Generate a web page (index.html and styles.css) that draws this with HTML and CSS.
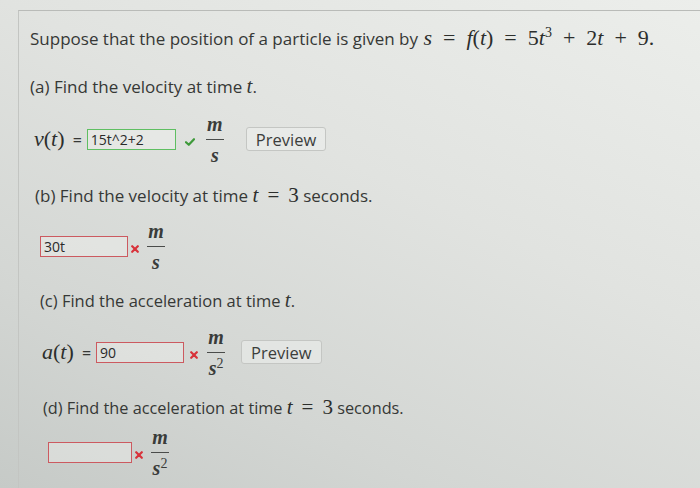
FILE: index.html
```html
<!DOCTYPE html>
<html>
<head>
<meta charset="utf-8">
<link rel="stylesheet" href="styles.css">
</head>
<body>
<div class="screen">
  <div class="panel">
    <p class="line title">Suppose that the position of a particle is given by <span class="math"><i>s</i><span class="op">=</span><i>f</i>(<i>t</i>)<span class="op">=</span>5<i>t</i><sup>3</sup><span class="op">+</span>2<i>t</i><span class="op">+</span>9.</span></p>

    <p class="line qa">(a) Find the velocity at time <i class="mv">t</i>.</p>

    <div class="answer r1">
      <span class="lhs"><span class="math"><i>v</i>(<i>t</i>)</span> =</span>
      <span class="field ok w1">15t^2+2</span>
      <svg class="mark check" viewBox="0 0 10 8" width="10" height="8"><path d="M1 4.2 L3.8 6.8 L9 1.2" fill="none" stroke="#3e9a3a" stroke-width="2.2" stroke-linecap="round" stroke-linejoin="round"/></svg>
      <span class="frac"><span class="num">m</span><span class="den">s</span></span>
      <span class="preview">Preview</span>
    </div>

    <p class="line qb">(b) Find the velocity at time <span class="math"><i>t</i><span class="op">=</span>3</span> seconds.</p>

    <div class="answer r2">
      <span class="field bad w2">30t</span>
      <svg class="mark cross" viewBox="0 0 8 8" width="8" height="8"><path d="M1.2 1.2 L6.8 6.8 M6.8 1.2 L1.2 6.8" stroke="#d8323a" stroke-width="2.2" stroke-linecap="round"/></svg>
      <span class="frac"><span class="num">m</span><span class="den">s</span></span>
    </div>

    <p class="line qc">(c) Find the acceleration at time <i class="mv">t</i>.</p>

    <div class="answer r3">
      <span class="lhs"><span class="math"><i>a</i>(<i>t</i>)</span> =</span>
      <span class="field bad w3">90</span>
      <svg class="mark cross" viewBox="0 0 8 8" width="8" height="8"><path d="M1.2 1.2 L6.8 6.8 M6.8 1.2 L1.2 6.8" stroke="#d8323a" stroke-width="2.2" stroke-linecap="round"/></svg>
      <span class="frac"><span class="num">m</span><span class="den">s<sup>2</sup></span></span>
      <span class="preview">Preview</span>
    </div>

    <p class="line qd">(d) Find the acceleration at time <span class="math"><i>t</i><span class="op">=</span>3</span> seconds.</p>

    <div class="answer r4">
      <span class="field bad w4"></span>
      <svg class="mark cross" viewBox="0 0 8 8" width="8" height="8"><path d="M1.2 1.2 L6.8 6.8 M6.8 1.2 L1.2 6.8" stroke="#d8323a" stroke-width="2.2" stroke-linecap="round"/></svg>
      <span class="frac"><span class="num">m</span><span class="den">s<sup>2</sup></span></span>
    </div>
  </div>
</div>
</body>
</html>
```

FILE: styles.css
```css
html, body {
  margin: 0;
  padding: 0;
}
body {
  width: 700px;
  height: 488px;
  overflow: hidden;
  font-family: "Open Sans", "Noto Sans", sans-serif;
  color: #363836;
}
.screen {
  width: 700px;
  height: 488px;
  background: linear-gradient(205deg, #eceeeb 0%, #e1e3e0 40%, #d3d6d3 75%, #c6cac7 100%);
  padding-top: 10px;
  box-sizing: border-box;
}
.panel {
  margin-left: 18px;
  height: 478px;
  border-top: 1px solid #b9bbb8;
  border-left: 1px solid #c3c5c2;
  padding: 15px 0 0 11px;
  box-sizing: border-box;
}
.line {
  margin: 0;
  font-size: 17px;
  line-height: 24px;
  white-space: nowrap;
}
.math {
  font-family: "Liberation Serif", "DejaVu Serif", serif;
  font-size: 21px;
  color: #2c2e2c;
}
.math i, i.mv {
  font-family: "Liberation Serif", "DejaVu Serif", serif;
  font-style: italic;
  font-size: 21px;
}
.math sup {
  font-size: 14px;
  vertical-align: 8px;
  line-height: 0;
}
.op {
  margin: 0 10px;
}
.title .math {
  margin-left: 1px;
  font-size: 22px;
}
.title .math i {
  font-size: 22px;
}
.title .op {
  margin: 0 11px;
}
.qa {
  margin-top: 23px;
}
.qb {
  margin-top: 14px;
  margin-left: 5px;
}
.qb .op, .qd .op {
  margin: 0 9px;
}
.qc {
  margin-top: 12px;
  margin-left: 10px;
  font-size: 16.5px;
}
.qd {
  margin-top: 13px;
  margin-left: 13px;
  font-size: 16.3px;
}
.answer {
  display: flex;
  align-items: center;
  height: 60px;
}
.r1 {
  margin-top: 10px;
  margin-left: 4px;
}
.r2 {
  margin-top: 8px;
  margin-left: 10px;
}
.r3 {
  margin-top: 9px;
  margin-left: 12px;
}
.r4 {
  margin-top: 3px;
  margin-left: 18px;
  height: 58px;
}
.lhs {
  font-size: 16px;
  margin-right: 5px;
  white-space: nowrap;
}
.lhs .math {
  font-size: 22px;
  margin-right: 4px;
}
.lhs .math i {
  font-size: 22px;
}
.field {
  display: inline-block;
  height: 21px;
  line-height: 20px;
  box-sizing: border-box;
  padding: 0 3px;
  font-size: 14px;
  color: #2a2a2a;
  background: rgba(245, 246, 244, 0.35);
}
.ok {
  border: 1px solid #5fbf62;
}
.bad {
  border: 1px solid #cc5a60;
}
.w1 { width: 89px; }
.w2 { width: 88px; }
.w3 { width: 88px; }
.w4 { width: 84px; }
.mark {
  margin-left: 9px;
  margin-right: 11px;
  position: relative;
  top: 3px;
}
.r2 .mark, .r4 .mark {
  margin-left: 3px;
  margin-right: 8px;
}
.r3 .mark {
  margin-left: 6px;
  margin-right: 9px;
}
.frac {
  display: inline-flex;
  flex-direction: column;
  align-items: center;
  font-family: "Liberation Serif", "DejaVu Serif", serif;
  font-style: italic;
  font-size: 20px;
  font-weight: bold;
  color: #3a3c3a;
}
.num {
  line-height: 26px;
  padding: 0 1px 2px;
  border-bottom: 1px solid #4a4c4a;
  min-width: 16px;
  text-align: center;
}
.den {
  line-height: 26px;
  padding-top: 2px;
}
.den sup {
  font-style: normal;
  font-weight: normal;
  font-size: 14px;
  vertical-align: 7px;
  line-height: 0;
}
.preview {
  display: inline-block;
  margin-left: 22px;
  padding: 0 9px;
  height: 24px;
  line-height: 23px;
  box-sizing: border-box;
  border: 1px solid #c4c6c3;
  border-radius: 3px;
  background: rgba(240, 241, 239, 0.5);
  font-size: 16.5px;
  color: #3c3e3c;
}
.r3 .preview {
  margin-left: 16px;
}
```
